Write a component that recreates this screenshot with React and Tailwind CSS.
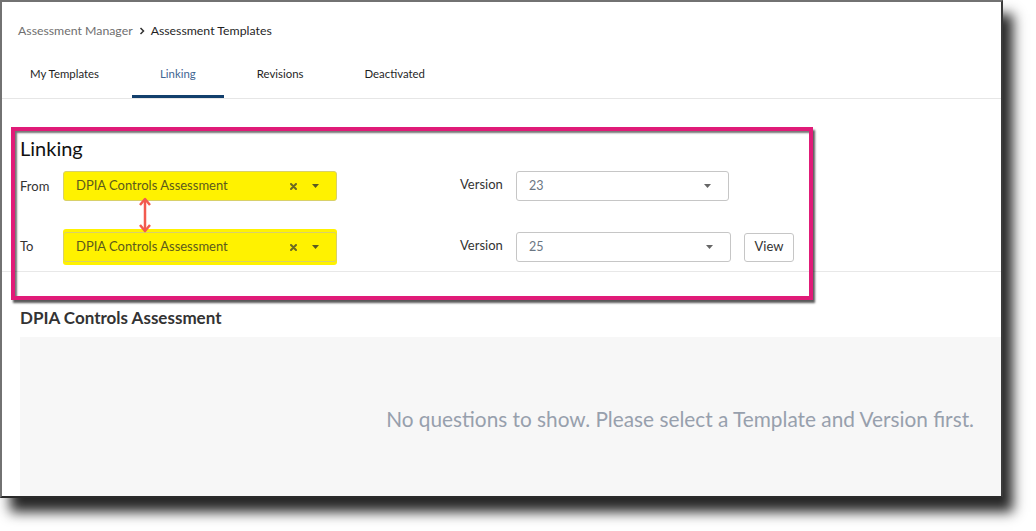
import React from 'react'

function Caret({ color = '#555' }) {
  return (
    <svg width="7" height="4" viewBox="0 0 7 4" className="shrink-0">
      <path d="M0 0 L7 0 L3.5 4 Z" fill={color} />
    </svg>
  )
}

function ClearIcon() {
  return (
    <svg width="7" height="7" viewBox="0 0 7 7" className="shrink-0">
      <path d="M1 1 L6 6 M6 1 L1 6" stroke="#6b6a22" strokeWidth="2" strokeLinecap="round" />
    </svg>
  )
}

function TemplateSelect({ extra = '' }) {
  return (
    <div className={`w-[274px] h-[30px] flex items-center pl-3 pr-[17px] bg-[#fff200] border border-[#d8d06a] rounded-[3px] ${extra}`}>
      <span className="flex-1 text-[13px] text-[#5c5a1c]">DPIA Controls Assessment</span>
      <ClearIcon />
      <span className="ml-[15px]"><Caret color="#5a5920" /></span>
    </div>
  )
}

function VersionSelect({ value, width }) {
  return (
    <div className={`${width} h-[30px] flex items-center pl-3 pr-[17px] bg-white border border-[#c6c6c6] rounded-[3px]`}>
      <span className="flex-1 text-[12.5px] text-[#6b7683]">{value}</span>
      <Caret color="#666" />
    </div>
  )
}

function App() {
  const tabs = ['My Templates', 'Linking', 'Revisions', 'Deactivated']

  return (
    <div className="w-[1036px] h-[531px] bg-white font-['Lato','Noto_Sans',sans-serif]">
      <div className="relative w-[1003px] h-[498px] bg-white border-2 border-[#727272] border-r-[#3a3a3a] border-b-[#2b2b2b] shadow-[10px_14px_12px_rgba(0,0,0,0.85)] overflow-hidden flex flex-col">
        {/* breadcrumb */}
        <div className="pl-4 pt-[21px] flex items-center text-[12.3px] leading-4">
          <span className="text-[#6f6f6f]">Assessment Manager</span>
          <svg width="6" height="8" viewBox="0 0 6 8" className="mx-[6px]">
            <path d="M1.5 1 L4.5 4 L1.5 7" stroke="#333" strokeWidth="1.5" fill="none" />
          </svg>
          <span className="text-[#1f1f1f]">Assessment Templates</span>
        </div>

        {/* tabs */}
        <div className="flex gap-[5px] border-b border-[#e6e6e6]">
          {tabs.map((t) => (
            <div
              key={t}
              className={`px-7 pt-[27px] pb-[13px] text-[11.4px] leading-4 border-b-[3px] ${t === 'Linking' ? 'border-[#123f6c] text-[#3f6592]' : 'border-transparent text-[#1f1f1f]'}`}
            >
              {t}
            </div>
          ))}
        </div>

        {/* linking section */}
        <div className="pl-[18px] pb-[9px] border-b border-[#e8e8e8]">
          <h2 className="mt-[37px] text-[20px] leading-6 text-[#111]">Linking</h2>
          <div className="mt-[11px] flex items-center">
            <span className="w-[43px] text-[13px] text-[#333] mt-[2px]">From</span>
            <TemplateSelect />
            <span className="ml-[123px] w-[56px] text-[13px] text-[#333] -mt-[3px]">Version</span>
            <VersionSelect value="23" width="w-[213px]" />
          </div>
          <div className="mt-[31px] flex items-center">
            <span className="w-[43px] text-[13px] text-[#333]">To</span>
            <TemplateSelect extra="shadow-[0_3px_0_#fff200,0_-3px_0_#fff200]" />
            <span className="ml-[123px] w-[56px] text-[13px] text-[#333] -mt-[3px]">Version</span>
            <VersionSelect value="25" width="w-[215px]" />
            <button className="ml-[13px] w-[50px] h-[29px] border border-[#c6c6c6] rounded-[3px] bg-white text-[13px] text-[#333]">
              View
            </button>
          </div>
        </div>

        {/* template preview */}
        <h3 className="pl-[18px] mt-[36px] text-[17px] leading-5 font-bold text-[#333]">DPIA Controls Assessment</h3>
        <div className="ml-[18px] mt-[9px] flex-1 bg-[#f7f7f7] flex justify-end pr-[27px] pt-[68px]">
          <p className="text-[20.8px] leading-7 text-[#97a0ad]">
            No questions to show. Please select a Template and Version first.
          </p>
        </div>

        {/* annotation: highlight box */}
        <div className="absolute left-[9px] top-[125px] w-[802px] h-[173px] border-4 border-[#e01b78] shadow-[2px_3px_2px_rgba(0,0,0,0.65),inset_2px_2px_2px_rgba(0,0,0,0.55)] pointer-events-none" />

        {/* annotation: link arrow */}
        <svg width="14" height="38" viewBox="0 0 14 38" className="absolute left-[136px] top-[194px]">
          <path d="M7 3 L7 35" stroke="#f25a4f" strokeWidth="2.5" />
          <path d="M2 9 L7 3 L12 9" stroke="#f25a4f" strokeWidth="2.5" fill="none" strokeLinejoin="round" />
          <path d="M2 29 L7 35 L12 29" stroke="#f25a4f" strokeWidth="2.5" fill="none" strokeLinejoin="round" />
        </svg>
      </div>
    </div>
  )
}

export default App
